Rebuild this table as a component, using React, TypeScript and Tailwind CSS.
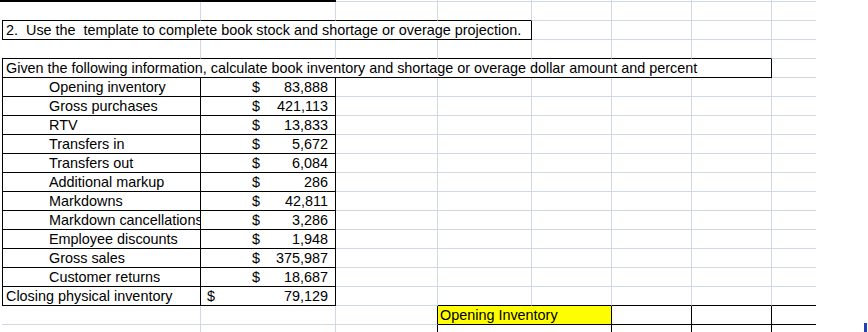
import React from "react";

const G = "border-[#d0d7e5]";

const items: [string, string][] = [
  ["Opening inventory", "83,888"],
  ["Gross purchases", "421,113"],
  ["RTV", "13,833"],
  ["Transfers in", "5,672"],
  ["Transfers out", "6,084"],
  ["Additional markup", "286"],
  ["Markdowns", "42,811"],
  ["Markdown cancellations", "3,286"],
  ["Employee discounts", "1,948"],
  ["Gross sales", "375,987"],
  ["Customer returns", "18,687"],
];

function Plain({ w }: { w: string }) {
  return <div className={`shrink-0 h-full border-r border-b ${G} ${w}`} />;
}

function Tail() {
  return (
    <>
      <div className={`shrink-0 h-full w-[80px] border-r border-b ${G}`} />
      <div className={`shrink-0 h-full w-[80px] border-r border-b ${G}`} />
      <div className={`shrink-0 h-full w-[80px] border-r border-b ${G}`} />
      <div className={`shrink-0 h-full w-[44px] border-b ${G}`} />
    </>
  );
}

export default function App() {
  return (
    <div className="w-[868px] h-[332px] bg-white overflow-hidden font-['Liberation_Sans',Arial,sans-serif] text-[14.4px] leading-[18px] text-black">
      {/* row 0: thick top line */}
      <div className="flex h-[2px]">
        <div className="shrink-0 w-[336px] h-full bg-black" />
        <div className={`shrink-0 h-full w-[102px] border-r border-b ${G}`} />
        <div className={`shrink-0 h-full w-[94px] border-r border-b ${G}`} />
        <Tail />
      </div>
      {/* row 1 */}
      <div className="flex h-[19px]">
        <div className="shrink-0 w-[2px]" />
        <div className={`shrink-0 h-full w-[199px] border-r ${G} border-b border-b-black`} />
        <div className={`shrink-0 h-full w-[135px] border-r ${G} border-b border-b-black`} />
        <div className={`shrink-0 h-full w-[102px] border-r ${G} border-b border-b-black`} />
        <div className={`shrink-0 h-full w-[94px] border-r ${G} border-b border-b-black`} />
        <Tail />
      </div>
      {/* row 2 */}
      <div className="flex h-[19px]">
        <div className="shrink-0 w-[2px]" />
        <div className="shrink-0 h-full w-[530px] border-l border-r border-b border-black pl-[3px] whitespace-pre overflow-hidden">
          {"2.  Use the  template to complete book stock and shortage or overage projection."}
        </div>
        <Tail />
      </div>
      {/* row 3 */}
      <div className="flex h-[19px]">
        <div className="shrink-0 w-[2px]" />
        <div className={`shrink-0 h-full w-[199px] border-r ${G} border-b border-b-black`} />
        <div className={`shrink-0 h-full w-[135px] border-r ${G} border-b border-b-black`} />
        <div className={`shrink-0 h-full w-[102px] border-r ${G} border-b border-b-black`} />
        <div className={`shrink-0 h-full w-[94px] border-r ${G} border-b border-b-black`} />
        <div className={`shrink-0 h-full w-[80px] border-r ${G} border-b border-b-black`} />
        <div className={`shrink-0 h-full w-[80px] border-r ${G} border-b border-b-black`} />
        <div className={`shrink-0 h-full w-[80px] border-r ${G} border-b border-b-black`} />
        <div className={`shrink-0 h-full w-[44px] border-b ${G}`} />
      </div>
      {/* row 4 */}
      <div className="flex h-[19px]">
        <div className="shrink-0 w-[2px]" />
        <div className="shrink-0 h-full w-[770px] border-l border-r border-b border-black pl-[3px] whitespace-nowrap overflow-hidden">
          Given the following information, calculate book inventory and shortage or overage dollar amount and percent
        </div>
        <div className={`shrink-0 h-full w-[44px] border-b ${G}`} />
      </div>
      {/* rows 5-15 */}
      {items.map(([label, value]) => (
        <div key={label} className="flex h-[19px]">
          <div className="shrink-0 w-[2px]" />
          <div className="shrink-0 h-full w-[199px] border-l border-r border-b border-black pl-[46px] whitespace-nowrap overflow-hidden">
            {label}
          </div>
          <div className="shrink-0 h-full w-[135px] border-r border-b border-black flex pl-[51px] pr-[7px]">
            <span>$</span>
            <span className="ml-auto">{value}</span>
          </div>
          <Plain w="w-[102px]" />
          <Plain w="w-[94px]" />
          <Tail />
        </div>
      ))}
      {/* row 16 */}
      <div className="flex h-[19px]">
        <div className="shrink-0 w-[2px]" />
        <div className="shrink-0 h-full w-[199px] border-l border-r border-b border-black pl-[3px] whitespace-nowrap overflow-hidden">
          Closing physical inventory
        </div>
        <div className="shrink-0 h-full w-[135px] border-r border-b border-black flex pl-[6px] pr-[7px]">
          <span>$</span>
          <span className="ml-auto">79,129</span>
        </div>
        <Plain w="w-[102px]" />
        <div className={`shrink-0 h-full w-[94px] border-r ${G} border-b border-b-black`} />
        <div className={`shrink-0 h-full w-[80px] border-r ${G} border-b border-b-black`} />
        <div className={`shrink-0 h-full w-[80px] border-r ${G} border-b border-b-black`} />
        <div className={`shrink-0 h-full w-[80px] border-r ${G} border-b border-b-black`} />
        <div className="shrink-0 h-full w-[44px] border-b border-black" />
      </div>
      {/* row 17 */}
      <div className="flex h-[19px]">
        <div className="shrink-0 w-[2px]" />
        <Plain w="w-[199px]" />
        <Plain w="w-[135px]" />
        <div className={`shrink-0 h-full w-[102px] border-b ${G} border-r border-r-black`} />
        <div className="shrink-0 h-full w-[174px] bg-[#ffff00] border-r border-b border-black pl-[2px] whitespace-nowrap overflow-hidden">
          Opening Inventory
        </div>
        <div className="shrink-0 h-full w-[80px] border-r border-b border-black" />
        <div className="shrink-0 h-full w-[80px] border-r border-b border-black" />
        <div className="shrink-0 h-full w-[44px] border-b border-black" />
        <div className="ml-auto mr-[1px] mt-[17px] w-[3px] h-[2px] bg-[#1f3fbf]" />
      </div>
      {/* row 18 partial */}
      <div className="flex h-[8px]">
        <div className="shrink-0 w-[2px]" />
        <div className={`shrink-0 h-full w-[199px] border-r ${G}`} />
        <div className={`shrink-0 h-full w-[135px] border-r ${G}`} />
        <div className="shrink-0 h-full w-[102px] border-r border-black" />
        <div className="shrink-0 h-full w-[174px] border-r border-black" />
        <div className="shrink-0 h-full w-[80px] border-r border-black" />
        <div className="shrink-0 h-full w-[80px] border-r border-black" />
        <div className="shrink-0 h-full w-[44px]" />
        <div className="ml-auto mr-[1px] w-[3px] h-full bg-[#1f3fbf]" />
      </div>
    </div>
  );
}
